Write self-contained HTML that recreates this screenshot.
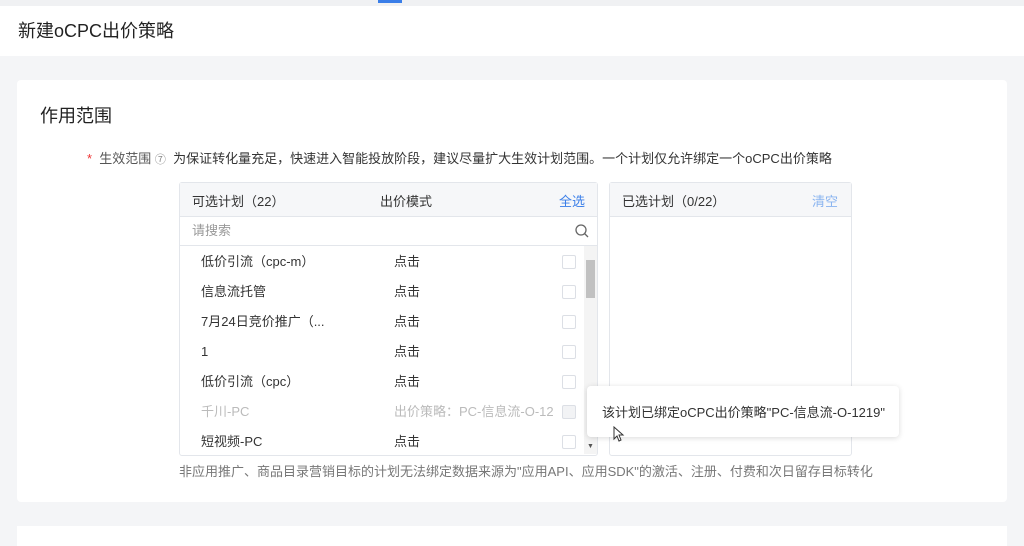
<!DOCTYPE html>
<html><head><meta charset="utf-8"><style>
*{margin:0;padding:0;box-sizing:border-box}
body{width:1024px;height:539px;overflow:hidden;background:#f4f5f7;font-family:"Liberation Sans","Noto Sans CJK SC",sans-serif;color:#333;position:relative}
.a{position:absolute}
.top{left:0;top:0;width:1024px;height:6px;background:#f0f1f3}
.hdr{left:0;top:6px;width:1024px;height:50px;background:#fff;font-size:18px;padding:11px 18px;color:#222}
.card{left:17px;top:80px;width:990px;height:422px;background:#fff;border-radius:4px}
.card2{left:17px;top:526px;width:990px;height:20px;background:#fff}
.panel{background:#fff;border:1px solid #e3e6eb;border-radius:3px}
.ph{height:34px;background:#f6f7f9;border-bottom:1px solid #e3e6eb;font-size:13px}
.row{position:absolute;left:0;width:400px;height:30px;font-size:13px;line-height:30px}
.cb{position:absolute;left:382px;top:8px;width:14px;height:14px;border:1px solid #dcdfe5;border-radius:2px;background:#fff}
</style></head><body>
<div class="a top"></div>
<div class="a" style="left:378px;top:0;width:24px;height:3px;background:#3a7ee8"></div>
<div class="a hdr">新建oCPC出价策略</div>
<div class="a card"></div>
<div class="a card2"></div>
<div class="a" style="left:40px;top:102px;font-size:18px;color:#222">作用范围</div>
<div class="a" style="left:87px;top:148px;font-size:13px;color:#555"><span style="color:#e33">*</span>&nbsp; 生效范围 <span style="font-size:11px;color:#888">⑦</span>&nbsp; <span style="color:#333">为保证转化量充足，快速进入智能投放阶段，建议尽量扩大生效计划范围。一个计划仅允许绑定一个oCPC出价策略</span></div>

<div class="a panel" style="left:179px;top:182px;width:419px;height:274px">
 <div class="ph" style="position:relative">
  <span class="a" style="left:12px;top:8px">可选计划（22）</span>
  <span class="a" style="left:200px;top:8px">出价模式</span>
  <span class="a" style="left:379px;top:8px;color:#3a7ee8">全选</span>
 </div>
 <div style="position:relative;height:29px;border-bottom:1px solid #e3e6eb;font-size:13px;color:#999;line-height:27px;padding-left:12px">请搜索
  <svg class="a" style="left:395px;top:7px" width="14" height="14" viewBox="0 0 14 14"><circle cx="6" cy="6" r="5" fill="none" stroke="#666" stroke-width="1.3"/><path d="M9.5 9.5L13 13" stroke="#666" stroke-width="1.3"/></svg>
 </div>
 <div style="position:relative">
  <div class="row" style="top:1px"><span class="a" style="left:21px">低价引流（cpc-m）</span><span class="a" style="left:214px">点击</span><span class="cb"></span></div>
  <div class="row" style="top:31px"><span class="a" style="left:21px">信息流托管</span><span class="a" style="left:214px">点击</span><span class="cb"></span></div>
  <div class="row" style="top:61px"><span class="a" style="left:21px">7月24日竞价推广（...</span><span class="a" style="left:214px">点击</span><span class="cb"></span></div>
  <div class="row" style="top:91px"><span class="a" style="left:21px">1</span><span class="a" style="left:214px">点击</span><span class="cb"></span></div>
  <div class="row" style="top:121px"><span class="a" style="left:21px">低价引流（cpc）</span><span class="a" style="left:214px">点击</span><span class="cb"></span></div>
  <div class="row" style="top:151px;color:#bbb"><span class="a" style="left:21px">千川-PC</span><span class="a" style="left:214px">出价策略：PC-信息流-O-12</span><span class="cb" style="background:#f2f3f5"></span></div>
  <div class="row" style="top:181px"><span class="a" style="left:21px">短视频-PC</span><span class="a" style="left:214px">点击</span><span class="cb"></span></div>
  <div class="a" style="left:404px;top:0;width:13px;height:208px;background:#f4f4f4"></div>
  <div class="a" style="left:406px;top:14px;width:9px;height:38px;background:#c1c1c1"></div>
  <div class="a" style="left:407px;top:197px;font-size:7px;color:#555">▼</div>
 </div>
</div>

<div class="a panel" style="left:609px;top:182px;width:243px;height:274px">
 <div class="ph" style="position:relative">
  <span class="a" style="left:12px;top:8px">已选计划（0/22）</span>
  <span class="a" style="left:202px;top:8px;color:#8ab4f0">清空</span>
 </div>
</div>

<div class="a" style="left:587px;top:386px;width:312px;height:51px;background:#fff;border-radius:4px;box-shadow:0 1px 6px rgba(0,0,0,.15);font-size:13px;color:#333;padding:16px 0 0 15px">该计划已绑定oCPC出价策略"PC-信息流-O-1219"</div>
<svg class="a" style="left:613px;top:426px" width="12" height="16" viewBox="0 0 12 16"><path d="M1 1L1 13L4 10L6 15L8 14L6 9L10 9Z" fill="#fff" stroke="#333" stroke-width="1"/></svg>

<div class="a" style="left:179px;top:461px;font-size:13px;color:#777">非应用推广、商品目录营销目标的计划无法绑定数据来源为"应用API、应用SDK"的激活、注册、付费和次日留存目标转化</div>
</body></html>
